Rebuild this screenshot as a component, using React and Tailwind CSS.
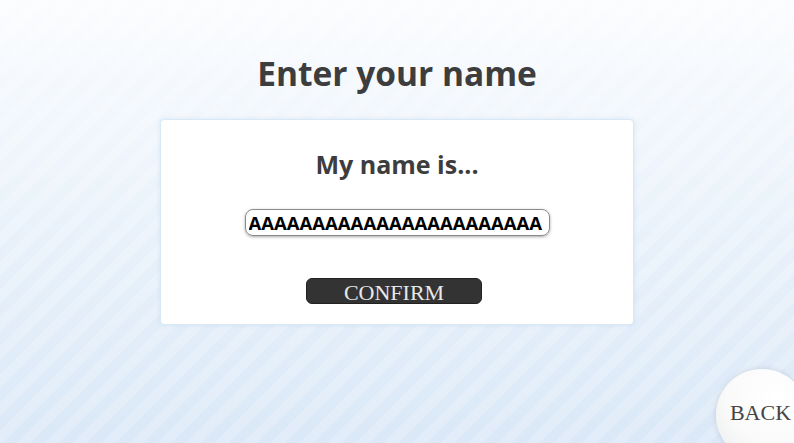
import { useState } from "react";

// Name entry screen: title, white card with input + confirm, round back button
export default function App() {
  const [name, setName] = useState("AAAAAAAAAAAAAAAAAAAAAAA");

  return (
    <div className="relative w-full h-[443px] overflow-hidden bg-[linear-gradient(180deg,#fbfcfe_0%,#ebf3fb_45%,#dae8f7_100%)] font-['Open_Sans',sans-serif]">
      {/* faint diagonal stripes */}
      <div className="absolute inset-0 bg-[repeating-linear-gradient(-45deg,rgba(255,255,255,0.2)_0px,rgba(255,255,255,0.2)_10px,rgba(255,255,255,0)_10px,rgba(255,255,255,0)_20px)]" />

      <div className="relative flex flex-col items-center pt-[50px]">
        <h1 className="text-[33.5px] leading-[46px] font-bold text-[#3d3d3d]">Enter your name</h1>

        <div className="mt-[23px] w-[474px] h-[206px] bg-white rounded-[4px] border border-[#d9e8f7] shadow-[0_0_4px_rgba(160,195,230,0.35)] flex flex-col items-center">
          <h2 className="mt-[28px] text-[25px] leading-[32px] font-bold text-[#3d3d3d]">My name is...</h2>

          <input
            value={name}
            onChange={(e) => setName(e.target.value)}
            className="mt-[29px] w-[305px] h-[27px] px-[3px] rounded-[8px] border border-[#8a8a8a] shadow-[0_1px_3px_rgba(0,0,0,0.35)] text-[18.5px] font-bold text-black outline-none"
          />

          <button className="mt-[42px] -ml-[6px] w-[176px] h-[26px] rounded-[6px] bg-[#333333] border border-[#222] text-[#e8e8e8] text-[22px] leading-[26px] pt-[1px] font-['Liberation_Serif',serif]">
            CONFIRM
          </button>
        </div>
      </div>

      <button className="absolute left-[716px] top-[369px] w-[92px] h-[92px] rounded-full bg-[radial-gradient(circle_at_65%_30%,#ffffff_0%,#fafafa_55%,#e8eaec_100%)] shadow-[0_0_6px_rgba(0,0,0,0.12)] flex items-center justify-center pr-[3px] pb-[6px] text-[22px] text-[#444] font-['Liberation_Serif',serif]">
        BACK
      </button>
    </div>
  );
}
